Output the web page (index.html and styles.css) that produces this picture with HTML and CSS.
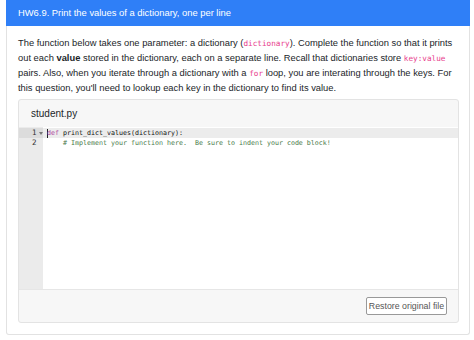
FILE: index.html
```html
<!DOCTYPE html>
<html lang="en">
<head>
    <meta charset="UTF-8">
    <title>HW6.9</title>
    <link rel="stylesheet" href="styles.css">
</head>
<body>
    <div class="card">
        <div class="card-header">HW6.9. Print the values of a dictionary, one per line</div>
        <div class="card-body">
            <p class="prompt">
                The function below takes one parameter: a dictionary (<code>dictionary</code>). Complete the function so that it prints<br>
                out each <strong>value</strong> stored in the dictionary, each on a separate line. Recall that dictionaries store <code>key:value</code><br>
                pairs. Also, when you iterate through a dictionary with a <code>for</code> loop, you are interating through the keys. For<br>
                this question, you'll need to lookup each key in the dictionary to find its value.
            </p>

            <div class="file-card">
                <div class="file-title">student.py</div>
                <div class="editor">
                    <div class="gutter">
                        <div class="gutter-line active">1<span class="fold"></span></div>
                        <div class="gutter-line">2</div>
                    </div>
                    <div class="code">
                        <div class="code-line active"><span class="cursor"></span><span class="kw">def</span> print_dict_values(dictionary):</div>
                        <div class="code-line"><span class="cm">    # Implement your function here.  Be sure to indent your code block!</span></div>
                    </div>
                </div>
                <div class="file-footer">
                    <button class="restore-btn">Restore original file</button>
                </div>
            </div>
        </div>
    </div>
</body>
</html>
```

FILE: styles.css
```css
* {
    margin: 0;
    padding: 0;
    box-sizing: border-box;
}

body {
    font-family: "Liberation Sans", Arial, sans-serif;
    background: #fff;
    color: #212529;
    padding: 0 4px 0 6px;
}

.card {
    border: 1px solid #e2e2e2;
    border-top: none;
    border-radius: 0 0 3px 3px;
}

.card-header {
    background: #2f7ff7;
    color: #fff;
    font-size: 9.4px;
    height: 26px;
    line-height: 26px;
    padding-left: 12px;
    margin: 0 -1px;
}

.card-body {
    padding: 10px 10px 11px 11px;
}

.prompt {
    font-size: 9.35px;
    line-height: 15px;
    margin-bottom: 3px;
    white-space: nowrap;
}

.prompt code {
    font-family: "DejaVu Sans Mono", monospace;
    font-size: 7.7px;
    line-height: 1;
    color: #e83e8c;
}

.prompt strong {
    font-weight: bold;
}

.file-card {
    border: 1px solid #e3e3e3;
    border-radius: 3px;
    background: #f7f7f7;
}

.file-title {
    height: 27px;
    line-height: 28px;
    padding-left: 12px;
    font-size: 10px;
    color: #212529;
}

.editor {
    display: flex;
    height: 163px;
    background: #fff;
    border-bottom: 1px solid #e6e6e6;
}

.gutter {
    width: 24px;
    background: #ebebeb;
    padding-top: 1px;
}

.gutter-line {
    font-family: "DejaVu Sans Mono", monospace;
    font-size: 7.5px;
    height: 10px;
    line-height: 10px;
    color: #333;
    padding-left: 13px;
    display: flex;
    align-items: center;
}

.gutter-line.active {
    background: #dcdcdc;
}

.fold {
    display: inline-block;
    margin-left: 2px;
    width: 0;
    height: 0;
    border-left: 2px solid transparent;
    border-right: 2px solid transparent;
    border-top: 3px solid #777;
}

.code {
    flex: 1;
    padding-top: 1px;
    padding-left: 4px;
}

.code-line {
    font-family: "DejaVu Sans Mono", monospace;
    font-size: 6.65px;
    height: 10px;
    line-height: 10px;
    color: #111;
    white-space: pre;
}

.code-line.active {
    background: #ececec;
    margin-left: -4px;
    padding-left: 4px;
}

.cursor {
    display: inline-block;
    width: 0;
    height: 9px;
    border-left: 1px solid #222;
    margin-right: -1px;
    vertical-align: middle;
}

.kw {
    color: #b0459e;
}

.cm {
    color: #4a7a4a;
}

.file-footer {
    display: flex;
    justify-content: flex-end;
    padding: 7px 11px 7px 0;
}

.restore-btn {
    font-family: "Liberation Sans", Arial, sans-serif;
    font-size: 8.8px;
    color: #555;
    background: #fff;
    border: 1px solid #999;
    border-radius: 2px;
    width: 81px;
    height: 18px;
}
```
